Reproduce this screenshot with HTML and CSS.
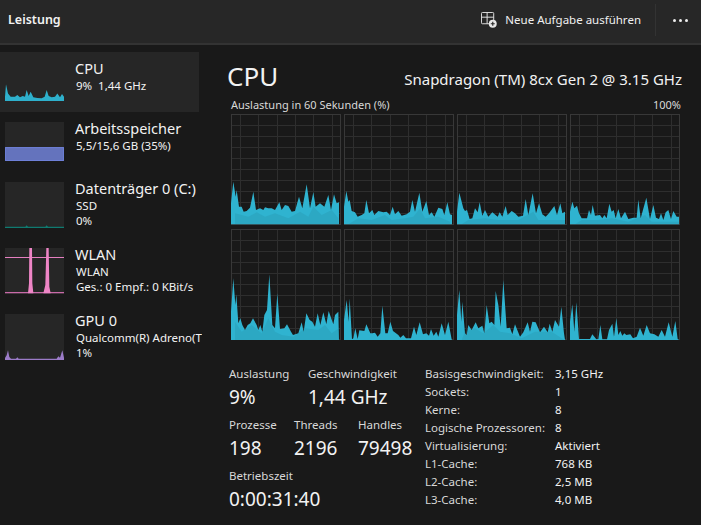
FILE: index.html
```html
<!DOCTYPE html>
<html lang="de">
<head>
<meta charset="utf-8">
<title>Leistung</title>
<link rel="stylesheet" href="styles.css">
</head>
<body>
<svg class="defs" width="0" height="0" aria-hidden="true">
  <defs>
    <g id="grid" fill="none" stroke="#2e2e2e" stroke-width="3">
      <path d="M28.500 0V333M82.500 0V333M139.500 0V333M193.500 0V333M247.500 0V333M304.500 0V333"/>
      <path d="M0 34.500H330M0 67.500H330M0 100.500H330M0 133.500H330M0 166.500H330M0 199.500H330M0 232.500H330M0 265.500H330M0 298.500H330"/>
      <rect x="1.500" y="1.500" width="327" height="330" stroke="#383838"/>
    </g>
  </defs>
</svg>
<header class="topbar">
  <h1 class="page-title">Leistung</h1>
  <div class="actions">
    <button class="run-task">
      <svg class="run-icon" width="16" height="16" viewBox="0 0 17 17" fill="none" stroke="#e8e8e8" stroke-width="1">
        <path d="M8.500 12.500H1.500a1 1 0 0 1-1-1V1.500a1 1 0 0 1 1-1h11a1 1 0 0 1 1 1v7"/>
        <path d="M6.500 .5v12M.5 5.500h13"/>
        <circle cx="12.500" cy="12.500" r="4.200" fill="#e8e8e8" stroke="none"/>
        <path d="M12.500 10.400v4.200M10.400 12.500h4.200" stroke="#272727" stroke-width="1.200"/>
      </svg>
      <span>Neue Aufgabe ausführen</span>
    </button>
    <span class="divider"></span>
    <span class="more"><i></i><i></i><i></i></span>
  </div>
</header>
<div class="layout">
  <nav class="sidebar">
    <div class="item selected">
      <svg class="thumb short" viewBox="15 185 177 118" preserveAspectRatio="none"><polygon fill="#2eb0cc" points="15,303 15,290 18,252 24,280 32,290 45,290 52,285 60,292 68,288 75,290 80,270 86,288 92,275 100,292 112,294 125,295 134,290 140,270 146,288 155,292 165,290 172,280 180,292 186,282 192,290 192,303"/></svg>
      <div class="info"><div class="name">CPU</div><div class="sub">9%&nbsp; 1,44 GHz</div></div>
    </div>
    <div class="item">
      <svg class="thumb short" viewBox="15 366 177 118" preserveAspectRatio="none"><rect x="15" y="442" width="177" height="42" fill="#6473bd"/><path d="M16 443.500H191V482.500H16Z" fill="none" stroke="#6e80d8" stroke-width="3"/></svg>
      <div class="info"><div class="name">Arbeitsspeicher</div><div class="sub">5,5/15,6 GB (35%)</div></div>
    </div>
    <div class="item">
      <svg class="thumb" viewBox="15 5 177 138" preserveAspectRatio="none"><polygon fill="#0f7a70" points="15,143 15,139 76,139 80,135 84,139 136,139 140,135 144,139 192,139 192,143"/></svg>
      <div class="info"><div class="name">Datenträger 0 (C:)</div><div class="sub">SSD</div><div class="sub">0%</div></div>
    </div>
    <div class="item">
      <svg class="thumb" viewBox="15 204 177 138" preserveAspectRatio="none"><path d="M15 232.500H192" stroke="#e57fc0" stroke-width="3"/><path d="M15 338H192" stroke="#c86aa8" stroke-width="4"/><polygon fill="#ee85c6" points="84,340 87,310 88,204 96,204 97,310 100,340"/><polygon fill="#ee85c6" points="130,340 136,315 139,204 146,204 148,320 152,340"/></svg>
      <div class="info"><div class="name">WLAN</div><div class="sub">WLAN</div><div class="sub">Ges.: 0 Empf.: 0 KBit/s</div></div>
    </div>
    <div class="item">
      <svg class="thumb" viewBox="15 403 177 136" preserveAspectRatio="none"><polygon fill="#9b7bc8" points="15,539 15,533 20,525 24,510 28,530 33,535 48,535 52,531 56,535 170,535 175,528 180,532 187,510 192,532 192,539"/></svg>
      <div class="info"><div class="name">GPU 0</div><div class="sub clip">Qualcomm(R) Adreno(TM)</div><div class="sub">1%</div></div>
    </div>
  </nav>
  <main class="content">
    <div class="title-row">
      <h2 class="cpu-title">CPU</h2>
      <div class="cpu-model">Snapdragon (TM) 8cx Gen 2 @ 3.15 GHz</div>
    </div>
    <div class="scale-row"><span>Auslastung in 60 Sekunden (%)</span><span>100%</span></div>
    <div class="charts">
      <svg class="chart" viewBox="0 0 330 333" preserveAspectRatio="none">
        <use href="#grid"/>
        <g transform="translate(-18 -27)">
          <polygon class="area" points="18,358 18,295 25,230 32,275 35,255 42,305 50,305 56,320 65,318 75,308 85,260 93,315 105,310 115,315 120,307 130,310 140,310 150,315 163,292 170,315 180,300 190,303 200,320 210,318 222,275 232,310 245,238 255,310 265,262 272,305 285,295 298,305 310,270 318,315 327,268 335,295 342,292 342,358"/>
          <polygon class="shade" points="30,358 30,325 70,335 95,322 120,335 150,325 190,340 225,320 250,335 265,305 290,330 320,315 340,340 340,358"/>
        </g>
      </svg>
      <svg class="chart" viewBox="0 0 330 333" preserveAspectRatio="none">
        <use href="#grid"/>
        <g transform="translate(-357 -27)">
          <polygon class="area" points="357,358 357,305 364,258 370,290 374,285 380,318 390,322 398,335 410,330 418,325 424,285 432,325 442,315 448,330 460,318 475,322 485,320 495,330 503,305 510,328 520,318 530,332 545,328 555,320 562,285 570,320 583,263 592,320 604,288 612,330 620,322 628,335 640,308 652,312 658,330 667,292 675,328 681,330 681,358"/>
          <polygon class="shade" points="370,358 400,340 440,345 480,330 500,345 540,340 565,335 585,310 600,340 640,335 675,350 675,358"/>
        </g>
      </svg>
      <svg class="chart" viewBox="0 0 330 333" preserveAspectRatio="none">
        <use href="#grid"/>
        <g transform="translate(-6 -27)">
          <polygon class="area" points="6,358 6,320 13,263 20,290 25,310 30,318 36,315 44,342 52,340 60,310 68,322 74,292 82,332 90,315 100,335 112,322 128,335 134,322 142,335 152,303 158,330 170,318 180,325 190,335 204,332 212,282 220,330 233,265 243,325 252,295 262,328 272,335 282,325 298,303 306,330 316,295 322,325 330,320 330,358"/>
          <polygon class="shade" points="20,358 40,345 90,340 130,345 190,345 235,320 250,345 330,345 330,358"/>
        </g>
      </svg>
      <svg class="chart" viewBox="0 0 330 333" preserveAspectRatio="none">
        <use href="#grid"/>
        <g transform="translate(-345 -27)">
          <polygon class="area" points="345,358 345,320 352,290 358,310 366,302 372,325 380,340 396,340 402,315 408,330 413,300 420,332 435,330 442,340 448,330 455,340 463,296 470,320 476,315 482,340 490,312 498,340 510,320 520,342 535,338 545,338 550,284 557,340 574,278 585,342 595,300 603,338 612,342 618,325 625,345 632,322 640,315 648,342 655,318 665,335 672,335 672,358"/>
          <polygon class="shade" points="360,358 380,345 430,345 470,340 520,350 570,330 590,350 672,350 672,358"/>
        </g>
      </svg>
      <svg class="chart" viewBox="0 0 330 333" preserveAspectRatio="none">
        <use href="#grid"/>
        <g transform="translate(-18 -12)">
          <polygon class="area" points="18,345 18,260 25,160 31,240 34,208 40,295 46,280 52,300 60,315 68,300 76,295 84,280 95,300 100,315 106,300 112,320 118,270 126,255 133,148 142,300 150,310 157,205 165,312 178,310 186,298 198,320 204,330 220,325 230,292 236,320 244,265 254,285 262,290 270,305 278,265 286,300 295,262 304,298 311,258 325,298 330,270 340,260 342,345"/>
          <polygon class="shade" points="30,345 30,290 50,320 80,300 110,325 130,280 150,320 170,330 205,335 240,310 280,315 300,300 320,325 342,310 342,345"/>
        </g>
      </svg>
      <svg class="chart" viewBox="0 0 330 333" preserveAspectRatio="none">
        <use href="#grid"/>
        <g transform="translate(-357 -12)">
          <polygon class="area" points="357,345 357,285 365,225 371,290 374,220 381,343 385,340 391,310 398,342 403,316 418,318 424,298 436,325 442,325 450,323 458,335 466,325 472,242 481,325 488,325 496,290 504,318 520,330 526,338 535,330 543,340 558,340 567,305 574,330 584,292 594,328 604,325 612,332 618,312 626,332 634,320 640,335 650,295 660,330 670,290 680,343 681,345"/>
        </g>
      </svg>
      <svg class="chart" viewBox="0 0 330 333" preserveAspectRatio="none">
        <use href="#grid"/>
        <g transform="translate(-6 -12)">
          <polygon class="area" points="6,345 6,270 13,195 19,290 22,230 30,325 35,330 40,300 50,315 62,292 70,310 82,302 88,325 95,240 103,295 110,290 118,300 122,198 130,240 137,305 145,165 155,310 165,308 172,328 180,298 195,335 205,322 218,292 225,320 232,290 242,292 255,322 267,305 278,322 284,296 292,320 300,285 312,305 319,245 327,325 330,345"/>
          <polygon class="shade" points="20,345 30,320 60,310 85,325 115,300 135,320 165,325 200,340 240,320 290,320 320,340 330,345"/>
        </g>
      </svg>
      <svg class="chart" viewBox="0 0 330 333" preserveAspectRatio="none">
        <use href="#grid"/>
        <g transform="translate(-345 -12)">
          <polygon class="area" points="345,345 345,290 352,238 358,320 364,232 372,342 405,342 412,328 424,343 430,342 436,300 442,343 456,343 462,315 472,296 477,335 484,280 490,330 496,318 502,332 508,325 514,330 526,328 534,340 545,335 555,308 565,332 575,300 585,325 598,328 610,335 620,315 630,335 641,292 652,335 661,288 668,342 672,345"/>
        </g>
      </svg>
    </div>
    <section class="stats">
      <div class="stats-left">
        <div class="stat-row">
          <div class="stat w-79"><div class="label">Auslastung</div><div class="value">9%</div></div>
          <div class="stat"><div class="label">Geschwindigkeit</div><div class="value">1,44 GHz</div></div>
        </div>
        <div class="stat-row">
          <div class="stat w-65"><div class="label">Prozesse</div><div class="value">198</div></div>
          <div class="stat w-64"><div class="label">Threads</div><div class="value">2196</div></div>
          <div class="stat"><div class="label">Handles</div><div class="value">79498</div></div>
        </div>
        <div class="stat-row">
          <div class="stat"><div class="label">Betriebszeit</div><div class="value">0:00:31:40</div></div>
        </div>
      </div>
      <dl class="specs">
        <dt>Basisgeschwindigkeit:</dt><dd>3,15 GHz</dd>
        <dt>Sockets:</dt><dd>1</dd>
        <dt>Kerne:</dt><dd>8</dd>
        <dt>Logische Prozessoren:</dt><dd>8</dd>
        <dt>Virtualisierung:</dt><dd>Aktiviert</dd>
        <dt>L1-Cache:</dt><dd>768 KB</dd>
        <dt>L2-Cache:</dt><dd>2,5 MB</dd>
        <dt>L3-Cache:</dt><dd>4,0 MB</dd>
      </dl>
    </section>
  </main>
</div>
</body>
</html>
```
FILE: styles.css
```css
* { box-sizing: border-box; }
html, body { margin: 0; height: 100%; }
body {
  width: 701px;
  height: 525px;
  overflow: hidden;
  background: #191919;
  color: #f2f2f2;
  font-family: "Noto Sans", "Open Sans", sans-serif;
  font-size: 12px;
  line-height: 16px;
}
.defs { display: block; height: 0; }
.topbar {
  height: 45px;
  background: #272727;
  border-bottom: 2px solid #333;
  display: flex;
  align-items: center;
  justify-content: space-between;
  padding: 0 13px 3px 8px;
}
.page-title { margin: 0; font-size: 12.5px; font-weight: 600; }
.actions { display: flex; align-items: center; }
.run-task {
  display: flex; align-items: center; gap: 8px;
  background: none; border: 0; padding: 0; margin: 0;
  color: #f0f0f0; font: inherit; font-size: 11.5px;
}
.divider { width: 1px; height: 32px; background: #333; margin: 0 17px 0 14px; }
.more { display: flex; gap: 3px; }
.more i { width: 3px; height: 3px; border-radius: 50%; background: #eee; }

.layout { display: flex; }
.sidebar { width: 199px; padding-top: 7px; flex: none; }
.item { display: flex; gap: 11px; padding: 10px 0 0 5px; height: 66px; }
.item.selected { background: #262626; height: 60px; }
.item:nth-child(2) { height: 60px; }
.thumb { width: 59px; height: 46px; background: #262626; flex: none; display: block; }
.thumb.short { height: 39px; }
.info { margin-top: -3px; min-width: 0; width: 124px; }
.name { font-size: 14.5px; line-height: 19px; white-space: nowrap; }
.sub { font-size: 11.5px; line-height: 15px; white-space: nowrap; margin-left: 1px; }
.clip { overflow: hidden; width: 126px; }

.content { flex: none; width: 502px; padding: 7px 0 0 28px; }
.title-row { display: flex; justify-content: space-between; align-items: flex-end; padding: 0 19px 4px 0; height: 46px; }
.cpu-title { margin: 0; font-size: 26px; line-height: 36px; font-weight: 400; }
.cpu-model { font-size: 15px; line-height: 20px; padding-bottom: 5px; }
.scale-row {
  display: flex; justify-content: space-between;
  padding: 0 20px 0 4px;
  font-size: 11px; line-height: 14px; color: #d8d8d8; height: 16px;
}
.charts {
  display: grid;
  grid-template-columns: repeat(4, 110px);
  grid-auto-rows: 111px;
  column-gap: 3px; row-gap: 4px;
  margin-left: 4px;
}
.chart { display: block; width: 110px; height: 111px; }
.area { fill: #2fb3d0; }
.shade { fill: #1d6f85; opacity: .16; }

.stats { display: flex; margin: 25px 0 0 2px; }
.stats-left { width: 196px; flex: none; }
.stat-row { display: flex; height: 51px; }
.stat { flex: none; padding-top: 1px; }
.w-79 { width: 79px; }
.w-65 { width: 65px; }
.w-64 { width: 64px; }
.label { font-size: 11.5px; line-height: 16px; color: #d8d8d8; white-space: nowrap; }
.value { font-size: 19px; line-height: 25px; margin-top: 3px; white-space: nowrap; }
.specs {
  margin: 0;
  display: grid;
  grid-template-columns: 130px auto;
  grid-auto-rows: 18px;
  font-size: 11.5px;
  line-height: 18px;
  align-content: start;
}
.specs dt { color: #d8d8d8; white-space: nowrap; }
.specs dd { margin: 0; color: #f2f2f2; }
```
